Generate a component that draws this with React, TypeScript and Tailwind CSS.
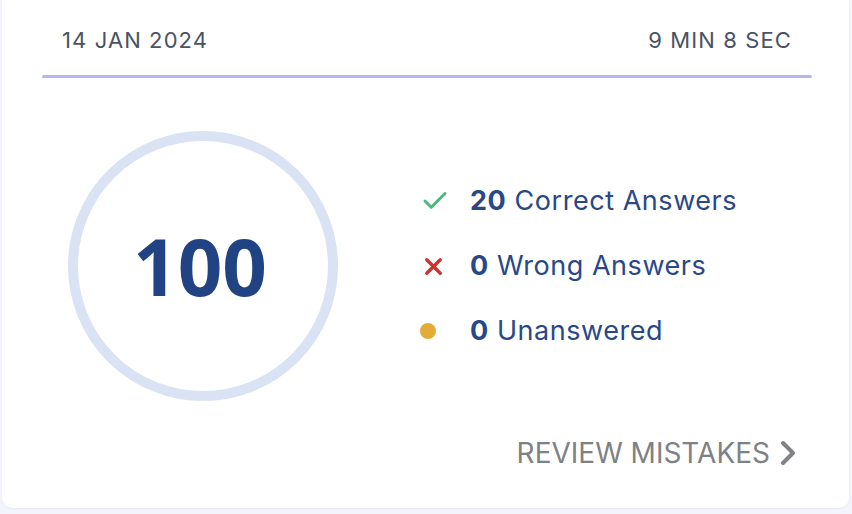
import { Check, X, ChevronRight } from "lucide-react";

const rows = [
  { n: 20, label: "Correct Answers", kind: "ok" },
  { n: 0, label: "Wrong Answers", kind: "bad" },
  { n: 0, label: "Unanswered", kind: "skip" },
];

function RowIcon({ kind }: { kind: string }) {
  if (kind === "ok") return <Check className="w-[30px] h-[30px] text-[#4cb87a]" strokeWidth={2.4} />;
  if (kind === "bad") return <X className="w-[27px] h-[27px] text-[#d2322d]" strokeWidth={3} />;
  return <span className="block w-[16px] h-[16px] rounded-full bg-[#e2ac37]" />;
}

export default function App() {
  return (
    <div className="w-[852px] h-[514px] bg-[#f4f5fc] overflow-hidden" style={{ fontFamily: "Inter, 'Noto Sans', sans-serif" }}>
      <div className="ml-[2px] w-[847px] h-[508px] bg-white rounded-b-[10px] shadow-[0_1px_2px_rgba(120,130,200,0.12)] pl-[40px] pr-[37px]">
        {/* header: date and duration */}
        <div className="flex justify-between pl-[20px] pr-[20px] pt-[25px] text-[22px] leading-[30px] tracking-[1.1px] text-[#4a5264]">
          <span>14 JAN 2024</span>
          <span>9 MIN 8 SEC</span>
        </div>
        <div className="mt-[20px] h-[3px] rounded-full bg-[#b3b8ee]" />

        <div className="flex items-center mt-[53px]">
          <div className="ml-[26px] w-[270px] h-[270px] rounded-full border-[10px] border-[#dae3f4] flex items-center justify-center pr-[6px]">
            <span className="text-[78px] font-bold leading-none text-[#224383]" style={{ fontFamily: "'Open Sans', sans-serif" }}>
              100
            </span>
          </div>

          {/* answer summary */}
          <ul className="ml-[80px] flex flex-col gap-[29px] text-[27px] leading-[36px] tracking-[0.55px] text-[#284888]">
            {rows.map((r, i) => (
              <li key={i} className="flex items-center">
                <span className="w-[52px] flex items-center pl-[2px]">
                  <RowIcon kind={r.kind} />
                </span>
                <span>
                  <b className="font-bold">{r.n}</b> {r.label}
                </span>
              </li>
            ))}
          </ul>
        </div>

        <div className="flex justify-end items-center mt-[32px] mr-[4px] text-[28px] leading-[36px] text-[#808184]">
          <span>REVIEW MISTAKES</span>
          <ChevronRight className="w-[40px] h-[40px] -ml-[2px]" strokeWidth={2.4} />
        </div>
      </div>
    </div>
  );
}
